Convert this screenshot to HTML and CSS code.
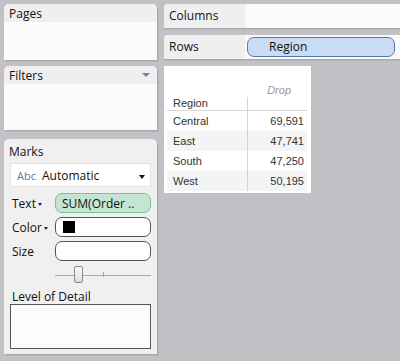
FILE: index.html
```html
<!DOCTYPE html>
<html>
<head>
<meta charset="utf-8">
<link rel="stylesheet" href="styles.css">
</head>
<body>
<div class="app">
  <div class="side">
    <section class="panel pages">
      <div class="phead">Pages</div>
      <div class="pbody"></div>
    </section>
    <section class="panel filters">
      <div class="phead">Filters<span class="tri"></span></div>
      <div class="pbody"></div>
    </section>
    <section class="panel marks">
      <div class="mhead">Marks</div>
      <div class="select"><span class="abc">Abc</span><span class="auto">Automatic</span><span class="caret"></span></div>
      <div class="mrow"><span class="mlabel">Text<span class="sm"></span></span><span class="pill green">SUM(Order ..</span></div>
      <div class="mrow"><span class="mlabel">Color<span class="sm"></span></span><span class="pill white"><span class="swatch"></span></span></div>
      <div class="mrow"><span class="mlabel">Size</span><span class="pill white"></span></div>
      <div class="slider"><span class="track"></span><span class="tick"></span><span class="thumb"></span></div>
      <div class="lodlabel">Level of Detail</div>
      <div class="lod"></div>
    </section>
  </div>
  <div class="main">
    <div class="shelf"><div class="slabel">Columns</div><div class="sarea"></div></div>
    <div class="shelf"><div class="slabel">Rows</div><div class="sarea"><span class="rpill">Region</span></div></div>
    <div class="table">
      <div class="thead">
        <div class="tc1">Region</div>
        <div class="tc2">Drop</div>
      </div>
      <div class="trow"><div class="tc1">Central</div><div class="tc2">69,591</div></div>
      <div class="trow alt"><div class="tc1">East</div><div class="tc2">47,741</div></div>
      <div class="trow"><div class="tc1">South</div><div class="tc2">47,250</div></div>
      <div class="trow alt"><div class="tc1">West</div><div class="tc2">50,195</div></div>
    </div>
  </div>
</div>
</body>
</html>
```
FILE: styles.css
```css
* { box-sizing: border-box; }
html, body { margin: 0; padding: 0; }
body {
  width: 400px; height: 361px; overflow: hidden;
  background: #c2c2c6;
  font-family: "Open Sans", "Noto Sans", sans-serif;
  font-size: 12px; color: #111;
}
.app { display: flex; align-items: flex-start; padding: 4px 0 0 4px; gap: 7px; }
.side { width: 153px; flex: none; display: flex; flex-direction: column; }
.panel {
  flex: none;
  background: #fbfbfb;
  border-radius: 5px 5px 0 0;
  box-shadow: 1px 1px 0 #a9a9ad, 2px 2px 0 #b6b6ba;
  overflow: hidden;
}
.phead {
  height: 18px; background: #efefef; padding: 1px 0 0 5px;
  line-height: 18px; position: relative;
}
.pages { height: 56px; }
.filters { height: 64px; margin-top: 6px; }
.tri {
  position: absolute; right: 7px; top: 7px;
  border-left: 4px solid transparent; border-right: 4px solid transparent;
  border-top: 4px solid #6487b3;
}
.marks { background: #f0f0f0; margin-top: 9px; height: 215px; padding: 0 6px; }
.mhead { height: 24px; line-height: 22px; margin-left: -1px; padding-top: 2px; }
.select {
  height: 24px; background: #fff; border: 1px solid #e2e2e2;
  display: flex; align-items: center; padding: 0 6px 0 6px; position: relative;
}
.abc { color: #5a78a0; font-size: 11px; margin-right: 6px; }
.auto { color: #111; }
.caret {
  position: absolute; right: 5px; top: 11px;
  border-left: 3.5px solid transparent; border-right: 3.5px solid transparent;
  border-top: 4px solid #111;
}
.mrow { display: flex; align-items: center; height: 24px; }
.select + .mrow { margin-top: 4px; }
.mlabel { width: 45px; padding-left: 2px; display: flex; align-items: center; }
.sm {
  display: inline-block; margin-left: 2px; margin-top: 2px;
  border-left: 2.5px solid transparent; border-right: 2.5px solid transparent;
  border-top: 3px solid #222;
}
.pill {
  flex: 1; height: 20px; border-radius: 7px; display: flex; align-items: center;
  padding-left: 6px;
}
.green { background: #c4e5d2; border: 1px solid #7bbf9a; }
.white { background: #fff; border: 1px solid #555; }
.swatch { width: 12px; height: 12px; background: #000; display: inline-block; margin-left: 1px; }
.slider { position: relative; height: 26px; margin-left: 45px; }
.track { position: absolute; left: 0; right: 0; top: 12px; height: 1px; background: #a8a8a8; }
.tick { position: absolute; left: 48px; top: 9px; width: 1px; height: 5px; background: #a8a8a8; }
.thumb {
  position: absolute; left: 19px; top: 3px; width: 9px; height: 17px;
  border: 1px solid #8a8a8a; border-radius: 2px;
  background: linear-gradient(#fbfbfb, #dcdcdc);
}
.lodlabel { padding-left: 2px; height: 15px; line-height: 15px; }
.lod { height: 45px; background: #fcfcfc; border: 1px solid #555; }
.main { flex: 1; display: flex; flex-direction: column; }
.shelf {
  display: flex; height: 24px; background: #fafafa;
  box-shadow: 0 1px 0 #a9a9ad, 0 2px 0 #b6b6ba;
  border-radius: 4px 0 0 0; overflow: hidden; margin-bottom: 7px;
}
.slabel { width: 81px; background: #efefef; padding-left: 5px; line-height: 24px; }
.sarea { flex: 1; display: flex; align-items: center; padding: 0 5px 0 2px; }
.rpill {
  flex: 1; height: 20px; border-radius: 7px; background: #c9dcf4;
  border: 1px solid #4f7fa9; padding-left: 21px; line-height: 18px;
}
.table {
  width: 147px; background: #fff;
  padding: 5px 4px 2px 3px;
  font-family: "Liberation Sans", Arial, sans-serif; font-size: 11px; color: #333;
}
.thead { display: flex; height: 40px; border-bottom: 1px solid #d8d8d8; }
.thead .tc1 { align-self: flex-end; padding-bottom: 1px; }
.thead .tc2 { font-style: italic; color: #999; padding-top: 13px; text-align: right; padding-right: 16px; }
.tc1 { width: 81px; padding-left: 6px; border-right: 1px solid #d4d4d4; }
.tc2 { flex: 1; text-align: right; padding-right: 3px; }
.trow { display: flex; height: 20px; line-height: 20px; }
.trow.alt { background: #f4f4f4; }
```
